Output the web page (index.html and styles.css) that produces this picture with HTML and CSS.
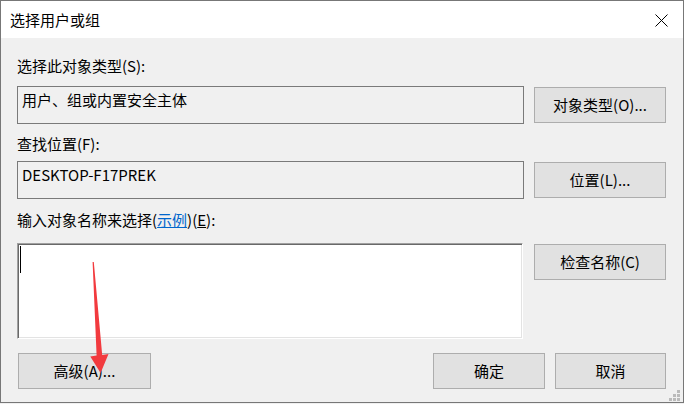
FILE: index.html
```html
<!DOCTYPE html>
<html lang="zh-CN">
<head>
<meta charset="utf-8">
<title>选择用户或组</title>
<link rel="stylesheet" href="styles.css">
</head>
<body>
<div class="window">
  <div class="titlebar">
    <span class="title">选择用户或组</span>
    <svg class="close" width="13" height="13" viewBox="0 0 13 13"><path d="M0.5 0.5 L12.5 12.5 M12.5 0.5 L0.5 12.5" stroke="#000" stroke-width="1" fill="none"/></svg>
  </div>
  <div class="content">
    <div class="label l1">选择此对象类型(S):</div>
    <div class="row r1">
      <div class="field">用户、组或内置安全主体</div>
      <div class="btn side">对象类型(O)...</div>
    </div>
    <div class="label l2">查找位置(F):</div>
    <div class="row r2">
      <div class="field">DESKTOP-F17PREK</div>
      <div class="btn side">位置(L)...</div>
    </div>
    <div class="label l3">输入对象名称来选择(<span class="link">示例</span>)(<span class="u">E</span>):</div>
    <div class="row r3">
      <div class="input"><span class="caret"></span></div>
      <div class="btn side">检查名称(C)</div>
    </div>
    <div class="bottom">
      <div class="btn adv">高级(A)...</div>
      <div class="spacer"></div>
      <div class="btn ok">确定</div>
      <div class="btn cancel">取消</div>
    </div>
  </div>
  <svg class="arrow" width="684" height="404" viewBox="0 0 684 404"><polygon points="92.6,262 93.8,262 102.2,355 108.5,354 100.6,373 90.3,356.5 96.6,355.5" fill="#f23a3e"/></svg>
  <svg class="grip" width="11" height="11" viewBox="0 0 11 11" fill="#bababa"><rect x="8" y="0" width="3" height="3"/><rect x="4" y="4" width="3" height="3"/><rect x="8" y="4" width="3" height="3"/><rect x="0" y="8" width="3" height="3"/><rect x="4" y="8" width="3" height="3"/><rect x="8" y="8" width="3" height="3"/></svg>
</div>
</body>
</html>
```
FILE: styles.css
```css
html, body {
  margin: 0;
  padding: 0;
  background: #f0f0f0;
}
body {
  font-family: "Noto Sans CJK SC", "Noto Sans", sans-serif;
  font-size: 15px;
  color: #000;
}
.window {
  position: relative;
  box-sizing: border-box;
  width: 684px;
  height: 403px;
  border: 1px solid #777;
  background: #f0f0f0;
  overflow: hidden;
}
.titlebar {
  height: 37px;
  background: #fff;
  display: flex;
  align-items: center;
  justify-content: space-between;
  padding: 0 15px 0 9px;
}
.title {
  line-height: 20px;
  margin-top: 1px;
}
.close {
  display: block;
  margin-top: 1px;
}
.content {
  padding: 0 17px 0 16px;
}
.label {
  height: 20px;
  line-height: 20px;
  white-space: nowrap;
}
.l1 { margin-top: 18px; }
.l2 { margin-top: 10px; }
.l3 { margin-top: 11px; }
.row {
  display: grid;
  grid-template-columns: 507px 132px;
  column-gap: 10px;
  align-items: start;
}
.r1 { margin-top: 10px; }
.r2 { margin-top: 7px; }
.r3 { margin-top: 13px; }
.field {
  box-sizing: border-box;
  height: 38px;
  border: 1px solid #7a7a7a;
  background: #f0f0f0;
  padding: 3px 4px 0;
  line-height: 20px;
  white-space: nowrap;
}
.input {
  box-sizing: border-box;
  width: 506px;
  height: 96px;
  background: #fff;
  border: 1px solid;
  border-color: #a0a0a0 #fff #fff #a0a0a0;
  box-shadow: inset 1px 1px #696969, inset -1px -1px #e3e3e3;
  padding: 1px 0 0 1px;
}
.caret {
  display: block;
  width: 1px;
  height: 27px;
  margin: 1px 0 0 1px;
  background: #000;
}
.btn {
  box-sizing: border-box;
  height: 36px;
  border: 1px solid #adadad;
  background: #e1e1e1;
  display: flex;
  align-items: center;
  justify-content: center;
  line-height: 20px;
  white-space: nowrap;
}
.side {
  margin-top: 1px;
  height: 36px;
}
.link {
  color: #0066cc;
  text-decoration: underline;
}
.u {
  text-decoration: underline;
}
.bottom {
  display: flex;
  margin-top: 14px;
  column-gap: 10px;
}
.spacer {
  flex: 1;
}
.adv {
  width: 133px;
  margin-left: 1px;
}
.ok {
  width: 112px;
}
.cancel {
  width: 111px;
}
.arrow {
  position: absolute;
  left: -1px;
  top: -1px;
  pointer-events: none;
}
.grip {
  position: absolute;
  right: 3px;
  bottom: 1px;
}
```
